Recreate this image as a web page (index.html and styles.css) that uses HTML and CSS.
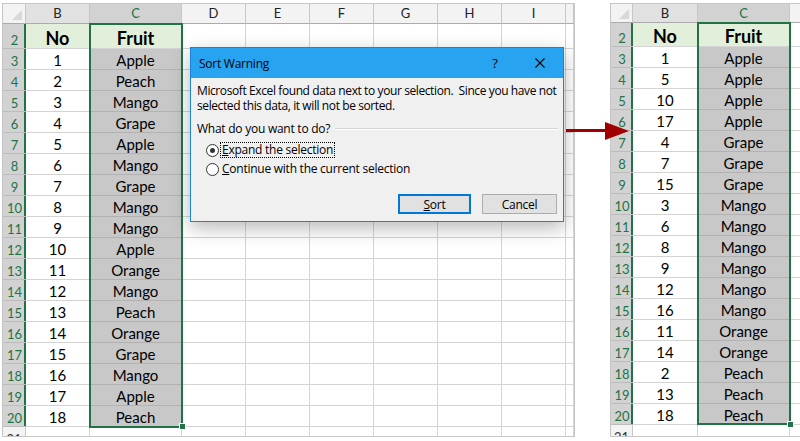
FILE: index.html
```html
<!DOCTYPE html>
<html lang="en">
<head>
  <meta charset="UTF-8">
  <title>Sort Warning</title>
  <link rel="stylesheet" href="styles.css">
</head>
<body>

  <div class="sheet sheet-left" id="sheetLeft">
    <div class="sel-box"></div>
    <div class="fill-handle"></div>

    <div class="dialog">
      <div class="dlg-title">
        <span class="title-text">Sort Warning</span>
        <span class="help">?</span>
        <span class="close">
          <svg width="10" height="10" viewBox="0 0 10 10"><path d="M0.5 0.5L9.5 9.5M9.5 0.5L0.5 9.5" stroke="#000" stroke-width="1.1" fill="none"/></svg>
        </span>
      </div>
      <div class="dlg-body">
        <p class="msg">Microsoft Excel found data next to your selection.&nbsp; Since you have not<br>selected this data, it will not be sorted.</p>
        <div class="group-head"><span>What do you want to do?</span><span class="group-line"></span></div>
        <div class="radio-row"><span class="radio checked"></span><span class="focus"><u>E</u>xpand the selection</span></div>
        <div class="radio-row"><span class="radio"></span><span class="label"><u>C</u>ontinue with the current selection</span></div>
        <div class="buttons">
          <button class="btn default"><u>S</u>ort</button>
          <button class="btn">Cancel</button>
        </div>
      </div>
    </div>
  </div>

  <div class="sheet sheet-right" id="sheetRight">
    <div class="sel-box"></div>
    <div class="fill-handle"></div>
  </div>

  <svg class="arrow" width="64" height="20" viewBox="0 0 64 20">
    <rect x="0" y="8" width="41" height="3" fill="#a00000"/>
    <polygon points="39,1 63,10 39,19" fill="#a00000"/>
  </svg>

  <script>
    const leftNo = [1,2,3,4,5,6,7,8,9,10,11,12,13,14,15,16,17,18];
    const leftFruit = ["Apple","Peach","Mango","Grape","Apple","Mango","Grape","Mango","Mango",
                       "Apple","Orange","Mango","Peach","Orange","Grape","Mango","Apple","Peach"];
    const rightNo = [1,5,10,17,4,7,15,3,6,8,9,12,16,11,14,2,13,18];
    const rightFruit = ["Apple","Apple","Apple","Apple","Grape","Grape","Grape","Mango","Mango",
                        "Mango","Mango","Mango","Mango","Orange","Orange","Peach","Peach","Peach"];

    function buildSheet(el, cols, nos, fruits) {
      const extra = cols.length - 2;
      const blanks = n => '<div class="c"></div>'.repeat(n);
      let html = '<div class="c corner"></div>';

      cols.forEach(col => {
        let cls = "c ch";
        if (col === "B") cls += " ch-b";
        if (col === "C") cls += " ch-c";
        html += `<div class="${cls}">${col}</div>`;
      });

      html += '<div class="c rh sel">2</div><div class="c head">No</div><div class="c head">Fruit</div>' + blanks(extra);

      nos.forEach((n, i) => {
        html += `<div class="c rh sel">${i + 3}</div><div class="c">${n}</div><div class="c shade">${fruits[i]}</div>` + blanks(extra);
      });

      html += '<div class="c rh">21</div>' + blanks(cols.length);
      el.insertAdjacentHTML("afterbegin", html);
    }

    buildSheet(document.getElementById("sheetLeft"), ["B","C","D","E","F","G","H","I",""], leftNo, leftFruit);
    buildSheet(document.getElementById("sheetRight"), ["B","C",""], rightNo, rightFruit);
  </script>

</body>
</html>
```

FILE: styles.css
```css
:root {
  --grid-line: #d4d4d4;
  --head-bg: #f3f3f3;
  --head-line: #c6c6c6;
  --excel-green: #217346;
  --shade: #c8c8c8;
}

body {
  margin: 0;
  padding: 3px 0 0 2px;
  height: 441px;
  box-sizing: border-box;
  overflow: hidden;
  background: #fff;
  display: flex;
  align-items: flex-start;
  position: relative;
  font-family: Lato, sans-serif;
  color: #000;
}

/* ---------- Sheet grids ---------- */
.sheet {
  position: relative;
  display: grid;
  border: 1px solid var(--head-line);
  overflow: hidden;
  height: 432px;
}

.sheet-left {
  width: 571px;
  margin-right: 35px;
  grid-template-columns: 23px 64px 92px repeat(6, 64px) 8px;
  grid-template-rows: 20px 25px repeat(19, 21px);
}

.sheet-right {
  width: 189px;
  border-right: none;
  grid-template-columns: 22px 65px 92px 64px;
  grid-template-rows: 19px 24px repeat(19, 21px);
}

.c {
  box-sizing: border-box;
  border-right: 1px solid var(--grid-line);
  border-bottom: 1px solid var(--grid-line);
  display: flex;
  align-items: flex-end;
  justify-content: center;
  font-size: 15px;
  line-height: 1;
  padding-bottom: 1px;
  overflow: hidden;
}

.corner {
  position: relative;
  background: var(--head-bg);
  border-color: var(--head-line);
  border-bottom-color: #ababab;
}

.corner::after {
  content: "";
  position: absolute;
  right: 3px;
  bottom: 3px;
  width: 10px;
  height: 10px;
  background: #d8d8d8;
  clip-path: polygon(100% 0, 100% 100%, 0 100%);
}

.ch {
  background: var(--head-bg);
  border-color: var(--head-line);
  border-bottom-color: #ababab;
  align-items: center;
  padding-bottom: 0;
  font-size: 13px;
  color: #222;
}

.ch-b {
  background: #e1e1e1;
}

.ch-c {
  background: #d2d2d2;
  color: var(--excel-green);
}

.rh {
  background: var(--head-bg);
  border-color: var(--head-line);
  font-size: 13px;
  color: #333;
}

.rh.sel {
  background: #d2d2d2;
  color: var(--excel-green);
  border-bottom-color: #bcbcbc;
  border-right: none;
  box-shadow: inset -2px 0 var(--excel-green);
}

.head {
  background: #e2efda;
  font-weight: 700;
  font-size: 18px;
}

.shade {
  background: var(--shade);
  border-bottom-color: #b2b2b2;
}

.sel-box {
  position: absolute;
  left: 86px;
  top: 19px;
  width: 94px;
  height: 405px;
  box-sizing: border-box;
  border: 2px solid var(--excel-green);
  pointer-events: none;
}

.sheet-right .sel-box {
  top: 18px;
  height: 403px;
}

.fill-handle {
  position: absolute;
  left: 176px;
  top: 419px;
  width: 7px;
  height: 7px;
  box-sizing: border-box;
  background: var(--excel-green);
  border: 1px solid #fff;
}

.sheet-right .fill-handle {
  top: 417px;
}

/* ---------- Arrow ---------- */
.arrow {
  position: absolute;
  left: 566px;
  top: 121px;
  z-index: 2;
}

/* ---------- Sort Warning dialog ---------- */
.dialog {
  position: absolute;
  left: 187px;
  top: 43px;
  width: 374px;
  height: 175px;
  box-sizing: border-box;
  border: 1px solid #1883d7;
  background: #f0f0f0;
  box-shadow: 0 6px 18px rgba(0, 0, 0, 0.28);
  font-family: "Open Sans", sans-serif;
  font-size: 12px;
  letter-spacing: -0.25px;
  color: #000;
}

.dlg-title {
  height: 30px;
  background: #27a3ef;
  display: flex;
  align-items: center;
  padding-left: 8px;
}

.title-text {
  flex: 1;
}

.help {
  width: 30px;
  margin-right: 7px;
  text-align: center;
  font-size: 13px;
}

.close {
  width: 46px;
  display: flex;
  justify-content: center;
}

.dlg-body {
  padding: 5px 5px 0 6px;
}

.msg {
  margin: 0;
  line-height: 15px;
  white-space: nowrap;
  letter-spacing: -0.4px;
}

.group-head {
  display: flex;
  align-items: center;
  margin-top: 9px;
  line-height: 14px;
}

.group-line {
  flex: 1;
  margin-left: 5px;
  border-top: 1px solid #d5d5d5;
  border-bottom: 1px solid #fff;
}

.radio-row {
  display: flex;
  align-items: center;
  height: 16px;
  margin-top: 3px;
}

.group-head + .radio-row {
  margin-top: 6px;
}

.radio {
  position: relative;
  width: 13px;
  height: 13px;
  box-sizing: border-box;
  margin-left: 9px;
  margin-right: 2px;
  border: 1px solid #333;
  border-radius: 50%;
  background: #fff;
}

.radio.checked::after {
  content: "";
  position: absolute;
  left: 3px;
  top: 3px;
  width: 5px;
  height: 5px;
  border-radius: 50%;
  background: #333;
}

.focus,
.label {
  line-height: 14px;
  padding: 0 1px;
}

.focus {
  outline: 1px dotted #000;
}

.buttons {
  display: flex;
  justify-content: flex-end;
  gap: 11px;
  margin-top: 17px;
  padding-right: 1px;
}

.btn {
  width: 75px;
  height: 20px;
  box-sizing: border-box;
  padding: 0;
  background: #e1e1e1;
  border: 1px solid #adadad;
  font-family: "Open Sans", sans-serif;
  font-size: 12px;
  letter-spacing: -0.25px;
  color: #000;
}

.btn.default {
  width: 73px;
  border: 2px solid #0078d7;
}
```
